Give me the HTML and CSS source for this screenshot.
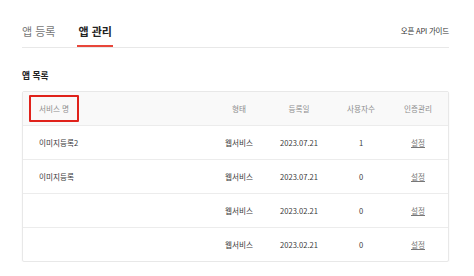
FILE: index.html
```html
<!DOCTYPE html>
<html lang="ko">
<head>
<meta charset="utf-8">
<link rel="stylesheet" href="styles.css">
</head>
<body>
<div class="page">
  <div class="tabbar">
    <div class="tabs">
      <span class="tab">앱 등록</span>
      <span class="tab active">앱 관리</span>
    </div>
    <span class="guide">오픈 API 가이드</span>
  </div>
  <div class="section-title">앱 목록</div>
  <div class="table">
    <div class="row head">
      <div class="cell name"><span class="mark">서비스 명</span></div>
      <div class="cell">형태</div>
      <div class="cell">등록일</div>
      <div class="cell">사용자수</div>
      <div class="cell">인증관리</div>
    </div>
    <div class="row">
      <div class="cell name">이미지등록2</div>
      <div class="cell">웹서비스</div>
      <div class="cell">2023.07.21</div>
      <div class="cell">1</div>
      <div class="cell"><span class="link">설정</span></div>
    </div>
    <div class="row">
      <div class="cell name">이미지등록</div>
      <div class="cell">웹서비스</div>
      <div class="cell">2023.07.21</div>
      <div class="cell">0</div>
      <div class="cell"><span class="link">설정</span></div>
    </div>
    <div class="row">
      <div class="cell name"></div>
      <div class="cell">웹서비스</div>
      <div class="cell">2023.02.21</div>
      <div class="cell">0</div>
      <div class="cell"><span class="link">설정</span></div>
    </div>
    <div class="row">
      <div class="cell name"></div>
      <div class="cell">웹서비스</div>
      <div class="cell">2023.02.21</div>
      <div class="cell">0</div>
      <div class="cell"><span class="link">설정</span></div>
    </div>
  </div>
</div>
</body>
</html>
```
FILE: styles.css
```css
html, body {
  margin: 0;
  padding: 0;
  background: #ffffff;
}
body {
  font-family: "Noto Sans CJK KR", "Noto Sans", sans-serif;
  color: #3a3a3a;
}
.page {
  width: 427px;
  padding-left: 22px;
}
.tabbar {
  display: flex;
  justify-content: space-between;
  align-items: center;
  padding-top: 23px;
  border-bottom: 1px solid #e8e8e8;
}
.tabs {
  display: flex;
  gap: 23px;
}
.tab {
  position: relative;
  font-size: 11px;
  line-height: 17px;
  padding-bottom: 7px;
  color: #777777;
}
.tab.active {
  color: #222222;
  font-weight: 700;
}
.tab.active::after {
  content: "";
  position: absolute;
  left: -1px;
  right: -1px;
  bottom: 0;
  height: 2px;
  background: #e8463a;
}
.guide {
  font-size: 7.5px;
  color: #333333;
  letter-spacing: -0.2px;
  padding-bottom: 9px;
}
.section-title {
  font-size: 8.7px;
  font-weight: 700;
  color: #222222;
  margin-top: 20px;
  line-height: 16px;
  height: 16px;
}
.table {
  margin-top: 7px;
  border: 1px solid #e8e8e8;
  border-radius: 2px;
  box-shadow: 0 1px 2px rgba(0, 0, 0, 0.05);
}
.row {
  display: grid;
  grid-template-columns: 1fr 50px 70px 54px 60px;
  height: 33px;
  align-items: center;
  border-top: 1px solid #ececec;
  font-size: 7.6px;
}
.row.head {
  border-top: none;
  background: #f9f9f9;
  color: #8e8e8e;
}
.cell {
  text-align: center;
}
.cell.name {
  text-align: left;
  padding-left: 16px;
}
.mark {
  display: inline-block;
  border: 2px solid #e0221b;
  border-radius: 1px;
  padding: 6px 8px 6px 8px;
  margin-left: -10px;
  line-height: 11px;
}
.link {
  color: #777777;
  text-decoration: underline;
}
```
